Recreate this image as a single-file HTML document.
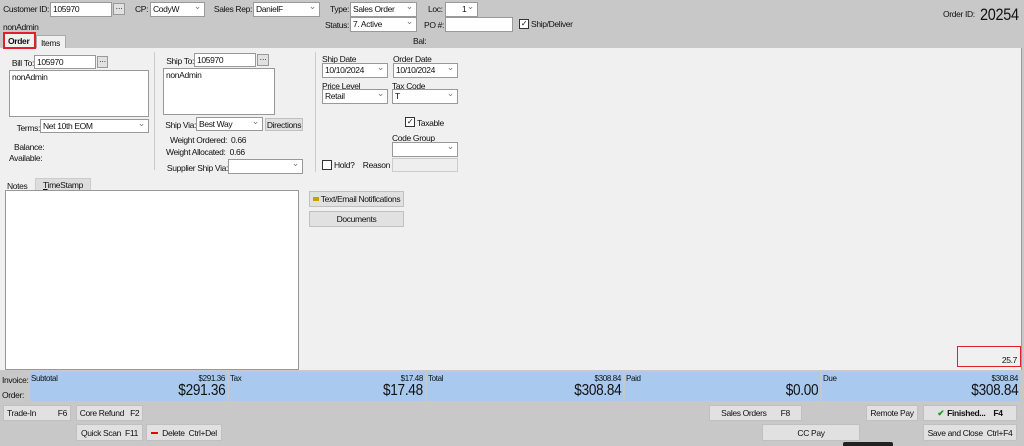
<!DOCTYPE html>
<html><head><meta charset="utf-8"><style>
*{box-sizing:border-box;margin:0;padding:0}
body{width:1024px;height:446px;overflow:hidden;background:#c8c8c8;font-family:"Liberation Sans Narrow","Liberation Sans",sans-serif;font-size:8.5px;letter-spacing:-0.35px;color:#111;position:relative}
.a{position:absolute;white-space:nowrap}
.in{position:absolute;background:#fff;border:1px solid #999;padding:1px 2px;font-size:8.5px;line-height:11px;white-space:nowrap;overflow:hidden}
.sel::after{content:"⌄";position:absolute;right:3px;top:-2px;color:#777;font-size:9px}
.btn{position:absolute;background:#e1e1e1;border:1px solid #c0c0c0;display:flex;align-items:center;justify-content:center;white-space:nowrap}
.dots{position:absolute;background:#e1e1e1;border:1px solid #999;font-size:8px;text-align:center;line-height:9px}
.cb{position:absolute;width:10px;height:10px;border:1px solid #333;background:#fff;font-size:8px;line-height:8px;text-align:center}
.cell{position:absolute;top:372px;height:29px;background:#a9c9ee}
.cell .l{position:absolute;left:1px;top:2px;font-size:8px}
.cell .s{position:absolute;right:2px;top:2px;font-size:8px}
.cell .b{position:absolute;right:2px;bottom:1px;font-size:16px;transform:scaleX(0.85);transform-origin:right}
.r{position:absolute;white-space:nowrap;text-align:right}
</style></head><body>
<div class="r" style="right:975px;top:4px">Customer ID:</div>
<div class="in" style="left:50px;top:2px;width:62px;height:15px">105970</div>
<div class="dots" style="left:113px;top:3px;width:12px;height:12px">···</div>
<div class="a" style="left:135px;top:4px">CP:</div>
<div class="in sel" style="left:150px;top:2px;width:55px;height:15px">CodyW</div>
<div class="r" style="right:772px;top:4px">Sales Rep:</div>
<div class="in sel" style="left:253px;top:2px;width:67px;height:15px">DanielF</div>
<div class="r" style="right:675px;top:4px">Type:</div>
<div class="in sel" style="left:350px;top:2px;width:67px;height:15px">Sales Order</div>
<div class="a" style="left:428px;top:4px">Loc:</div>
<div class="in sel" style="left:445px;top:2px;width:33px;height:15px;padding-left:16px">1</div>
<div class="r" style="right:675px;top:20px">Status:</div>
<div class="in sel" style="left:350px;top:17px;width:67px;height:15px">7. Active</div>
<div class="r" style="right:580px;top:20px">PO #:</div>
<div class="in" style="left:445px;top:17px;width:68px;height:15px"></div>
<div class="cb" style="left:519px;top:19px">✓</div>
<div class="a" style="left:531px;top:19px">Ship/Deliver</div>
<div class="a" style="left:943px;top:9px">Order ID:</div>
<div class="a" style="left:980px;top:5px;font-size:17px;transform:scaleX(0.85);transform-origin:left">20254</div>
<div class="a" style="left:3px;top:22px">nonAdmin</div>
<div class="a" style="left:413px;top:36px">Bal:</div>
<div class="a" style="left:36px;top:35px;width:30px;height:14px;background:#f0f0f0;border:1px solid #aaa;border-bottom:none;padding:2px 4px">Items</div>
<div class="a" style="left:0;top:48px;width:1022px;height:322px;background:#f0f0f0;border-right:1px solid #999"></div>
<div class="a" style="left:3px;top:32px;width:33px;height:17px;background:#f0f0f0;border:2px solid #e0202a;font-weight:bold;padding:2px 3px">Order</div>
<div class="r" style="right:990px;top:58px">Bill To:</div>
<div class="in" style="left:34px;top:55px;width:62px;height:14px">105970</div>
<div class="dots" style="left:97px;top:56px;width:11px;height:12px">···</div>
<div class="in" style="left:9px;top:70px;width:140px;height:47px">nonAdmin</div>
<div class="r" style="right:984px;top:123px">Terms:</div>
<div class="in sel" style="left:40px;top:119px;width:109px;height:14px">Net 10th EOM</div>
<div class="a" style="left:14px;top:142px">Balance:</div>
<div class="a" style="left:9px;top:153px">Available:</div>
<div class="a" style="left:154px;top:52px;width:1px;height:118px;background:#ccc"></div>
<div class="r" style="right:830px;top:56px">Ship To:</div>
<div class="in" style="left:194px;top:53px;width:62px;height:14px">105970</div>
<div class="dots" style="left:257px;top:54px;width:12px;height:12px">···</div>
<div class="in" style="left:163px;top:68px;width:112px;height:47px">nonAdmin</div>
<div class="r" style="right:828px;top:120px">Ship Via:</div>
<div class="in sel" style="left:196px;top:117px;width:67px;height:14px">Best Way</div>
<div class="btn" style="left:265px;top:118px;width:38px;height:13px">Directions</div>
<div class="a" style="left:170px;top:135px">Weight Ordered: &nbsp;0.66</div>
<div class="a" style="left:166px;top:147px">Weight Allocated: &nbsp;0.66</div>
<div class="r" style="right:796px;top:163px">Supplier Ship Via:</div>
<div class="in sel" style="left:228px;top:159px;width:75px;height:15px"></div>
<div class="a" style="left:315px;top:52px;width:1px;height:120px;background:#ccc"></div>
<div class="a" style="left:322px;top:54px">Ship Date</div>
<div class="in sel" style="left:322px;top:63px;width:66px;height:15px">10/10/2024</div>
<div class="a" style="left:393px;top:54px">Order Date</div>
<div class="in sel" style="left:393px;top:63px;width:65px;height:15px">10/10/2024</div>
<div class="a" style="left:322px;top:81px">Price Level</div>
<div class="in sel" style="left:322px;top:89px;width:66px;height:15px">Retail</div>
<div class="a" style="left:392px;top:81px">Tax Code</div>
<div class="in sel" style="left:392px;top:89px;width:66px;height:15px">T</div>
<div class="cb" style="left:405px;top:117px">✓</div>
<div class="a" style="left:417px;top:118px">Taxable</div>
<div class="a" style="left:392px;top:133px">Code Group</div>
<div class="in sel" style="left:392px;top:142px;width:66px;height:15px"></div>
<div class="cb" style="left:322px;top:160px"></div>
<div class="a" style="left:334px;top:160px">Hold?</div>
<div class="r" style="right:634px;top:160px">Reason</div>
<div class="a" style="left:392px;top:158px;width:66px;height:14px;background:#eee;border:1px solid #ccc"></div>
<div class="a" style="left:7px;top:181px">Notes</div>
<div class="a" style="left:35px;top:178px;width:56px;height:13px;background:#ddd;border:1px solid #ccc;padding:1px 7px"><u>T</u>imeStamp</div>
<div class="a" style="left:5px;top:190px;width:294px;height:180px;background:#fff;border:1px solid #999"></div>
<div class="btn" style="left:309px;top:191px;width:95px;height:16px"><span style="display:inline-block;width:6px;height:4px;background:#c8a000;margin-right:2px"></span>Text/Email Notifications</div>
<div class="btn" style="left:309px;top:211px;width:95px;height:16px">Documents</div>
<div class="a" style="left:957px;top:346px;width:64px;height:21px;border:1px solid #e0202a;text-align:right;padding:8px 3px 0 0">25.7</div>
<div class="a" style="left:2px;top:375px">Invoice:</div>
<div class="a" style="left:2px;top:390px">Order:</div>
<div class="cell" style="left:30px;width:197px"><span class="l">Subtotal</span><span class="s">$291.36</span><span class="b">$291.36</span></div>
<div class="cell" style="left:229px;width:196px"><span class="l">Tax</span><span class="s">$17.48</span><span class="b">$17.48</span></div>
<div class="cell" style="left:427px;width:196px"><span class="l">Total</span><span class="s">$308.84</span><span class="b">$308.84</span></div>
<div class="cell" style="left:625px;width:195px"><span class="l">Paid</span><span class="b">$0.00</span></div>
<div class="cell" style="left:822px;width:198px"><span class="l">Due</span><span class="s">$308.84</span><span class="b">$308.84</span></div>
<div class="btn" style="left:3px;top:405px;width:68px;height:16px;justify-content:space-between;padding:0 3px"><span>Trade-In</span><span>F6</span></div>
<div class="btn" style="left:76px;top:405px;width:67px;height:16px">Core Refund &nbsp; F2</div>
<div class="btn" style="left:709px;top:405px;width:93px;height:16px">Sales Orders &nbsp; &nbsp; &nbsp; F8</div>
<div class="btn" style="left:866px;top:405px;width:52px;height:16px">Remote Pay</div>
<div class="btn" style="left:923px;top:405px;width:94px;height:16px;font-weight:bold"><span style="color:#1a9a1a;margin-right:3px">✔</span>Finished... &nbsp; &nbsp;F4</div>
<div class="btn" style="left:76px;top:424px;width:67px;height:17px">Quick Scan &nbsp;F11</div>
<div class="btn" style="left:146px;top:424px;width:76px;height:17px"><span style="display:inline-block;width:7px;height:2px;background:#e00;margin-right:4px"></span>Delete &nbsp;Ctrl+Del</div>
<div class="btn" style="left:762px;top:424px;width:98px;height:17px">CC Pay</div>
<div class="btn" style="left:923px;top:424px;width:94px;height:17px">Save and Close &nbsp;Ctrl+F4</div>
<div class="a" style="left:843px;top:442px;width:50px;height:4px;background:#222;border-radius:2px 2px 0 0"></div>
</body></html>
